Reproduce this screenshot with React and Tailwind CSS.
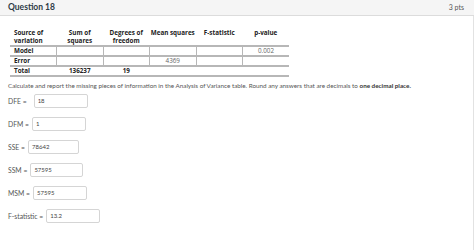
import React from 'react';

const answers = [
  { label: 'DFE', gap: 'gap-[7px]', value: '18', w: 'w-[54px]' },
  { label: 'DFM', gap: 'gap-[3px]', value: '1', w: 'w-[54px]' },
  { label: 'SSE', gap: 'gap-[3px]', value: '78642', w: 'w-[51px]' },
  { label: 'SSM', gap: 'gap-[3px]', value: '57595', w: 'w-[53px]' },
  { label: 'MSM', gap: 'gap-[3px]', value: '57595', w: 'w-[54px]' },
  { label: 'F-statistic', gap: 'gap-[3px]', value: '13.2', w: 'w-[54px]' },
];

const cols = [
  ['Source of', 'variation'],
  ['Sum of', 'squares'],
  ['Degrees of', 'freedom'],
  ['Mean squares'],
  ['F-statistic'],
  ['p-value'],
];

const rows = [
  { name: 'Model', cells: ['', '', '', '', '0.002'] },
  { name: 'Error', cells: ['', '', '4369', '', ''] },
];

const App = () => {
  return (
    <div className="w-[474px] h-[250px] bg-white overflow-hidden font-['Lato','Open_Sans',sans-serif] text-[#333] flex flex-col">
      <div className="h-[16px] shrink-0 bg-[#f5f5f5] border-b border-[#dcdcdc] flex items-center justify-between pl-[8px] pr-[10px]">
        <span className="text-[8.5px] font-bold text-[#2d3b45]">Question 18</span>
        <span className="text-[7px] text-[#555]">3 pts</span>
      </div>

      <div className="flex-1 border-r border-[#e2e2e2] pl-[10px] pt-[13px] flex flex-col">
        <table className="w-[279px] border-collapse text-[6.3px] font-['Open_Sans',sans-serif] table-fixed">
          <thead>
            <tr className="border-b-2 border-[#b7b7b7]">
              {cols.map((c, i) => (
                <th
                  key={i}
                  className={`font-bold align-top leading-[7.5px] h-[17px] pb-[1px] text-[#222] ${i === 0 ? 'text-left pl-[4px]' : 'text-center'}`}
                >
                  {c.map(l => <div key={l}>{l}</div>)}
                </th>
              ))}
            </tr>
          </thead>
          <tbody>
            {rows.map(r => (
              <tr key={r.name} className="border-b-2 border-[#b7b7b7]">
                <td className="h-[10px] p-0 font-bold pl-[4px] leading-[8px] text-[#222]">{r.name}</td>
                {r.cells.map((c, i) => (
                  <td key={i} className="h-[10px] p-0 border-l border-[#b7b7b7] text-center text-[#666] leading-[8px]">{c}</td>
                ))}
              </tr>
            ))}
            <tr className="border-b-2 border-[#b7b7b7]">
              <td className="h-[9px] p-0 font-bold pl-[4px] leading-[8px] text-[#222]">Total</td>
              <td className="h-[9px] p-0 font-bold text-center leading-[8px] text-[#222]">136237</td>
              <td className="h-[9px] p-0 font-bold text-center leading-[8px] text-[#222]">19</td>
              <td></td>
              <td></td>
              <td></td>
            </tr>
          </tbody>
        </table>

        <p className="mt-[4px] -ml-[2px] text-[6.3px] leading-[9px] text-[#555]">
          Calculate and report the missing pieces of information in the Analysis of Variance table. Round any answers that are decimals to <span className="font-bold text-[#333]">one decimal place.</span>
        </p>

        <div className="-ml-[2px] mt-[4px] flex flex-col gap-[9px]">
          {answers.map(a => (
            <div key={a.label} className={`h-[14px] flex items-center ${a.gap} text-[6.8px] leading-[8px] text-[#555]`}>
              <span>{a.label} =</span>
              <div className={`${a.w} h-[14px] border border-[#d5d5d5] rounded-[2px] px-[3px] pt-[1px] text-[6px] text-[#444] leading-[9px]`}>
                {a.value}
              </div>
            </div>
          ))}
        </div>
      </div>
    </div>
  );
};

export default App;
